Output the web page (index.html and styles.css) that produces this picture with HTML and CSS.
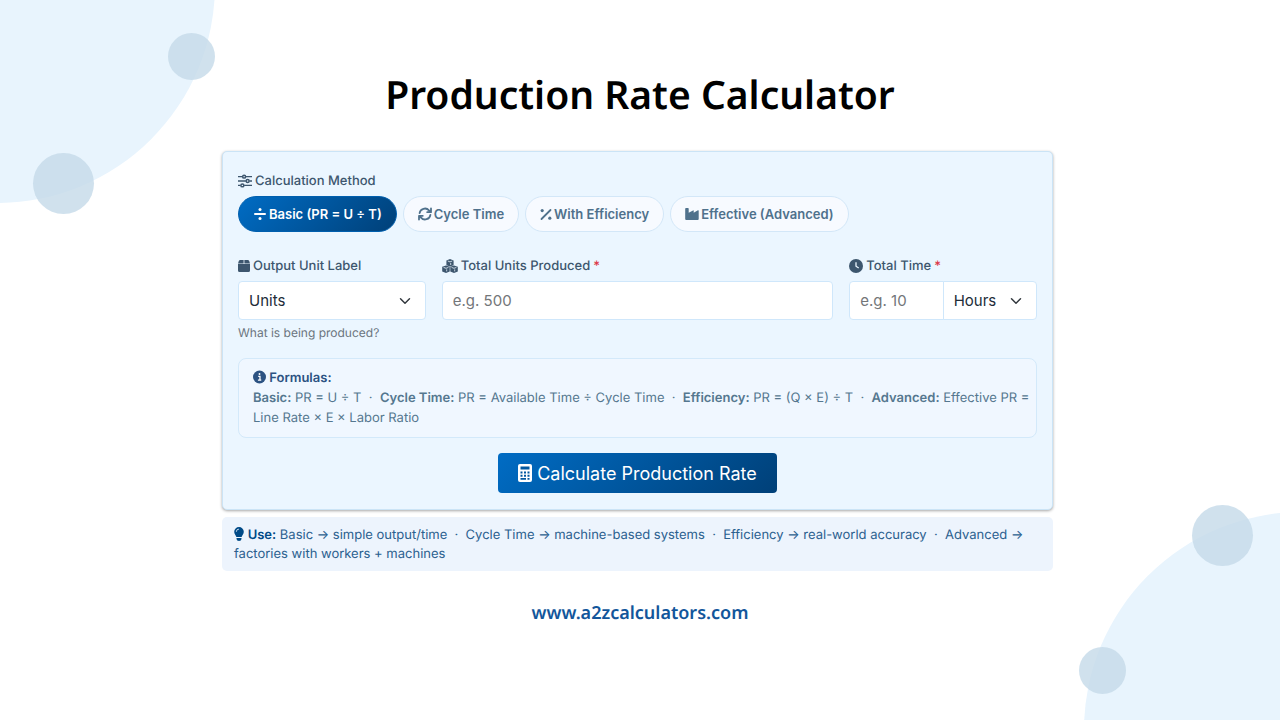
FILE: index.html
```html
<!DOCTYPE html>
<html lang="en">
<head>
    <meta charset="UTF-8">
    <meta name="viewport" content="width=device-width, initial-scale=1.0">
    <title>Production Rate Calculator</title>
    <link rel="stylesheet" href="styles.css">
</head>
<body>
    <!-- Background circles -->
    <div class="circles" aria-hidden="true">
        <span class="circle big top-left"></span>
        <span class="circle small near-top"></span>
        <span class="circle medium near-left"></span>
        <span class="circle big bottom-right"></span>
        <span class="circle medium near-right"></span>
        <span class="circle small near-bottom"></span>
    </div>

    <main class="page">
        <h1>Production Rate Calculator</h1>

        <div class="calculator">
            <form class="card">
                <fieldset class="methods">
                    <legend class="label">
                        <svg class="icon" viewBox="0 0 16 16" fill="none" stroke="currentColor" stroke-width="1.7"><path d="M0 3h5M9 3h7M0 8h9M13 8h3M0 13h3M7 13h9"/><circle cx="7" cy="3" r="1.7"/><circle cx="11" cy="8" r="1.7"/><circle cx="5" cy="13" r="1.7"/></svg>
                        Calculation Method
                    </legend>
                    <div class="pills">
                        <button type="button" class="pill active">
                            <svg class="icon" viewBox="0 0 14 14" fill="currentColor"><rect x="1" y="6" width="12" height="2" rx="1"/><circle cx="7" cy="2.4" r="1.5"/><circle cx="7" cy="11.6" r="1.5"/></svg>
                            Basic (PR = U ÷ T)
                        </button>
                        <button type="button" class="pill">
                            <svg class="icon" viewBox="0 0 14 14" fill="none" stroke="currentColor" stroke-width="1.8" stroke-linecap="round" stroke-linejoin="round"><path d="M1.600 6.200A5.400 5.400 0 0 1 11 3.400L12.800 5M13 1.400V5.200H9.200M12.400 7.800A5.400 5.400 0 0 1 3 10.600L1.200 9M1 12.600V8.800h3.800"/></svg>
                            Cycle Time
                        </button>
                        <button type="button" class="pill">
                            <svg class="icon narrow" viewBox="0 0 12 14" fill="currentColor"><path d="M1.500 12 10.500 3" fill="none" stroke="currentColor" stroke-width="1.800" stroke-linecap="round"/><circle cx="2.200" cy="3.600" r="1.600"/><circle cx="9.800" cy="11.200" r="1.600"/></svg>
                            With Efficiency
                        </button>
                        <button type="button" class="pill">
                            <svg class="icon" viewBox="0 0 14 14" fill="currentColor"><path d="M1 1h2q.7 0 .7.7v4L8 3.400q.7-.4.7.4v1.900l4.200-2.400q.8-.4.8.5V12q0 1-1 1H1.200q-1 0-1-1V1.700q0-.7.8-.7z"/></svg>
                            Effective (Advanced)
                        </button>
                    </div>
                </fieldset>

                <div class="fields">
                    <div class="field">
                        <label class="label" for="unitLabel">
                            <svg class="icon narrow" viewBox="0 0 12 14" fill="currentColor"><path d="M2.200 1h3.400v3.400H0L.8 2q.4-1 1.400-1zM6.400 1h3.400q1 0 1.400 1l.8 2.400H6.400zM0 5.100h12v6.400q0 1.500-1.500 1.500h-9Q0 13 0 11.500z"/></svg>
                            Output Unit Label
                        </label>
                        <select id="unitLabel">
                            <option>Units</option>
                        </select>
                        <small class="hint">What is being produced?</small>
                    </div>
                    <div class="field wide">
                        <label class="label" for="totalUnits">
                            <svg class="icon large" viewBox="0 0 16 14"><g fill="currentColor"><path d="M8 0l3.600 1.400v4.800L8 7.600 4.400 6.200V1.400z"/><path d="M4 6.400l3.700 1.400v4.800L4 14 .2 12.600V7.800z"/><path d="M12 6.400l3.800 1.400v4.800L12 14l-3.700-1.400V7.800z"/></g><path class="edge" d="M5.800 2L8 2.900 10.200 2M8.700 4v2M1.600 8.400L4 9.300l2.400-.9M4.700 10.400v2M9.600 8.400l2.400.9 2.400-.9M12.700 10.400v2"/></svg>
                            Total Units Produced <span class="required">*</span>
                        </label>
                        <input type="text" id="totalUnits" placeholder="e.g. 500">
                    </div>
                    <div class="field">
                        <label class="label" for="totalTime">
                            <svg class="icon" viewBox="0 0 14 14"><circle cx="7" cy="7" r="7" fill="currentColor"/><path class="hands" d="M7 3.200V7.200l2.700 1.800"/></svg>
                            Total Time <span class="required">*</span>
                        </label>
                        <div class="group">
                            <input type="text" id="totalTime" placeholder="e.g. 10">
                            <select aria-label="Time unit">
                                <option>Hours</option>
                            </select>
                        </div>
                    </div>
                </div>

                <div class="formulas">
                    <strong class="formulas-title"><svg class="icon info" viewBox="0 0 14 14"><circle cx="7" cy="7" r="7" fill="currentColor"/><path d="M5.600 6.300h1.900v3.900M5.300 10.300h3.600" fill="none" stroke="#fff" stroke-width="1.400"/><circle cx="7" cy="3.800" r="1" fill="#fff"/></svg> Formulas:</strong><br>
                    <strong>Basic:</strong> PR = U ÷ T &nbsp;·&nbsp; <strong>Cycle Time:</strong> PR = Available Time ÷ Cycle Time &nbsp;·&nbsp; <strong>Efficiency:</strong> PR = (Q × E) ÷ T &nbsp;·&nbsp; <strong>Advanced:</strong> Effective PR = Line Rate × E × Labor Ratio
                </div>

                <button type="submit" class="submit">
                    <svg class="icon" viewBox="0 0 14 18"><rect width="14" height="18" rx="2" fill="currentColor"/><path d="M2.500 2.500h9v3h-9zM2.500 7.500h2v2h-2zM6 7.500h2v2H6zM9.500 7.500h2v2h-2zM2.500 10.700h2v2h-2zM6 10.700h2v2H6zM9.500 10.700h2v2h-2zM2.500 14h5.500v1.700H2.500zM9.500 14h2v1.700h-2z" fill="#00579f"/></svg>
                    Calculate Production Rate
                </button>
            </form>

            <p class="usage">
                <svg class="icon bulb" viewBox="0 0 10 14" fill="currentColor"><path d="M5 0a4.800 4.800 0 0 1 4.800 4.800c0 2.200-1.600 3.300-2.200 5.200H2.400C1.800 8.100.2 7 .2 4.800A4.800 4.800 0 0 1 5 0zM2.500 11h5v1Q7.300 14 5 14T2.500 12z"/><path d="M2.300 4.800A2.700 2.700 0 0 1 5 2.100" fill="none" stroke="#edf4fd" stroke-width=".8"/></svg>
                <strong>Use:</strong> Basic → simple output/time &nbsp;·&nbsp; Cycle Time → machine-based systems &nbsp;·&nbsp; Efficiency → real-world accuracy &nbsp;·&nbsp; Advanced → factories with workers + machines
            </p>
        </div>

        <a class="site" href="#">www.a2zcalculators.com</a>
    </main>
</body>
</html>
```
FILE: styles.css
```css
* {
    box-sizing: border-box;
}
body {
    margin: 0;
    min-height: 100vh;
    position: relative;
    background: #fff;
    color: #3d566e;
    font-family: Inter, "Liberation Sans", sans-serif;
    font-size: 13px;
    text-rendering: geometricPrecision;
}

/* Background circles */
.circles {
    position: absolute;
    inset: 0;
    overflow: hidden;
}
.circle {
    position: absolute;
    border-radius: 50%;
    background: rgba(196, 217, 233, 0.8);
}
.big {
    width: 436px;
    height: 436px;
    background: #e8f4fd;
}
.medium {
    width: 61px;
    height: 61px;
}
.small {
    width: 47px;
    height: 47px;
}
.top-left {
    left: -221px;
    top: -233px;
}
.near-top {
    left: 168px;
    top: 33px;
}
.near-left {
    left: 33px;
    top: 153px;
}
.bottom-right {
    right: -240px;
    bottom: -228px;
}
.near-right {
    right: 27px;
    bottom: 154px;
}
.near-bottom {
    right: 154px;
    bottom: 26px;
}

.page {
    position: relative;
    display: flex;
    flex-direction: column;
    align-items: center;
    padding-top: 68px;
}
h1 {
    margin: 0 0 29px;
    color: #000;
    font-family: "Noto Sans", sans-serif;
    font-size: 39px;
    font-weight: 600;
    line-height: 54px;
}
.calculator {
    width: 100%;
    max-width: 836px;
    padding-right: 5px;
}
.card {
    display: flex;
    flex-direction: column;
    padding: 19px 15px 16px;
    border: 1px solid #cbe4f6;
    border-radius: 5px;
    background: #ebf6ff;
    box-shadow: 0 1px 3px rgba(0, 0, 0, 0.35);
}
.icon {
    width: 14px;
    height: 14px;
    flex: none;
    vertical-align: -2px;
}
.narrow {
    width: 12px;
}
.large {
    width: 16px;
}
.info {
    width: 13px;
}
.label {
    display: flex;
    align-items: center;
    gap: 3px;
    padding: 0;
    font-weight: 500;
    line-height: 20px;
}

/* Method pills */
.methods {
    margin: 0;
    padding: 0;
    border: 0;
}
.pills {
    display: flex;
    flex-wrap: wrap;
    gap: 6px;
    padding-top: 5px;
}
.pill {
    display: flex;
    align-items: center;
    gap: 2px;
    height: 36px;
    padding: 0 14px;
    border: 1px solid #d3e7f8;
    border-radius: 18px;
    background: #f7faff;
    color: #4f718c;
    font: 600 13px Inter, sans-serif;
}
.pill.active {
    border-color: #005fae;
    background: linear-gradient(135deg, #006cc4, #004078);
    color: #fff;
}

/* Fields */
.fields {
    display: grid;
    grid-template-columns: repeat(12, 1fr);
    gap: 16px;
    padding-top: 24px;
}
.field {
    grid-column: span 3;
    display: flex;
    flex-direction: column;
    min-width: 0;
}
.field.wide {
    grid-column: span 6;
}
.field .label {
    padding-bottom: 5px;
}
.required {
    color: #dc3545;
}
.edge {
    fill: none;
    stroke: #ebf6ff;
    stroke-width: 0.8;
}
.hands {
    fill: none;
    stroke: #ebf6ff;
    stroke-width: 1.3;
}
input,
select {
    width: 100%;
    min-width: 0;
    height: 39px;
    padding: 0 10px;
    border: 1px solid #cfe7fb;
    border-radius: 4px;
    background: #fff;
    color: #212c38;
    font: 400 15px Inter, sans-serif;
}
input::placeholder {
    color: #737679;
}
select {
    appearance: none;
    background: #fff url("data:image/svg+xml,%3Csvg xmlns='http://www.w3.org/2000/svg' viewBox='0 0 16 16'%3E%3Cpath fill='none' stroke='%23343a40' stroke-linecap='round' stroke-linejoin='round' stroke-width='2' d='m2 5 6 6 6-6'/%3E%3C/svg%3E") no-repeat right 14px center / 12px 12px;
}
.group {
    display: flex;
}
.group input {
    border-radius: 4px 0 0 4px;
}
.group select {
    margin-left: -1px;
    border-radius: 0 4px 4px 0;
}
.hint {
    padding-top: 5px;
    color: #6a747d;
    font-size: 12px;
    line-height: 16px;
}

/* Formulas and submit */
.formulas {
    margin: 17px 0 15px;
    padding: 9px 4px 9px 14px;
    border: 1px solid #d3e9fa;
    border-radius: 8px;
    background: #f0f7ff;
    color: #55778f;
    line-height: 20px;
}
strong {
    font-weight: 600;
}
.formulas-title {
    color: #2c5282;
}
.submit {
    align-self: center;
    display: flex;
    align-items: center;
    gap: 5px;
    height: 40px;
    padding: 0 20px;
    border: 0;
    border-radius: 4px;
    background: linear-gradient(135deg, #006cc4, #004078);
    color: #fff;
    font: 400 18px Inter, sans-serif;
}
.submit .icon {
    height: 18px;
}
.usage {
    margin: 7px 0 0;
    padding: 9px 12px 7px;
    border-radius: 5px;
    background: #edf4fd;
    color: #2b608f;
    line-height: 19px;
}
.usage strong,
.bulb {
    color: #004a87;
}
.bulb {
    width: 10px;
}
.site {
    margin-top: 29px;
    color: #12569b;
    font-family: "Noto Sans", sans-serif;
    font-size: 18px;
    font-weight: 600;
    line-height: 26px;
    text-decoration: none;
}
```
